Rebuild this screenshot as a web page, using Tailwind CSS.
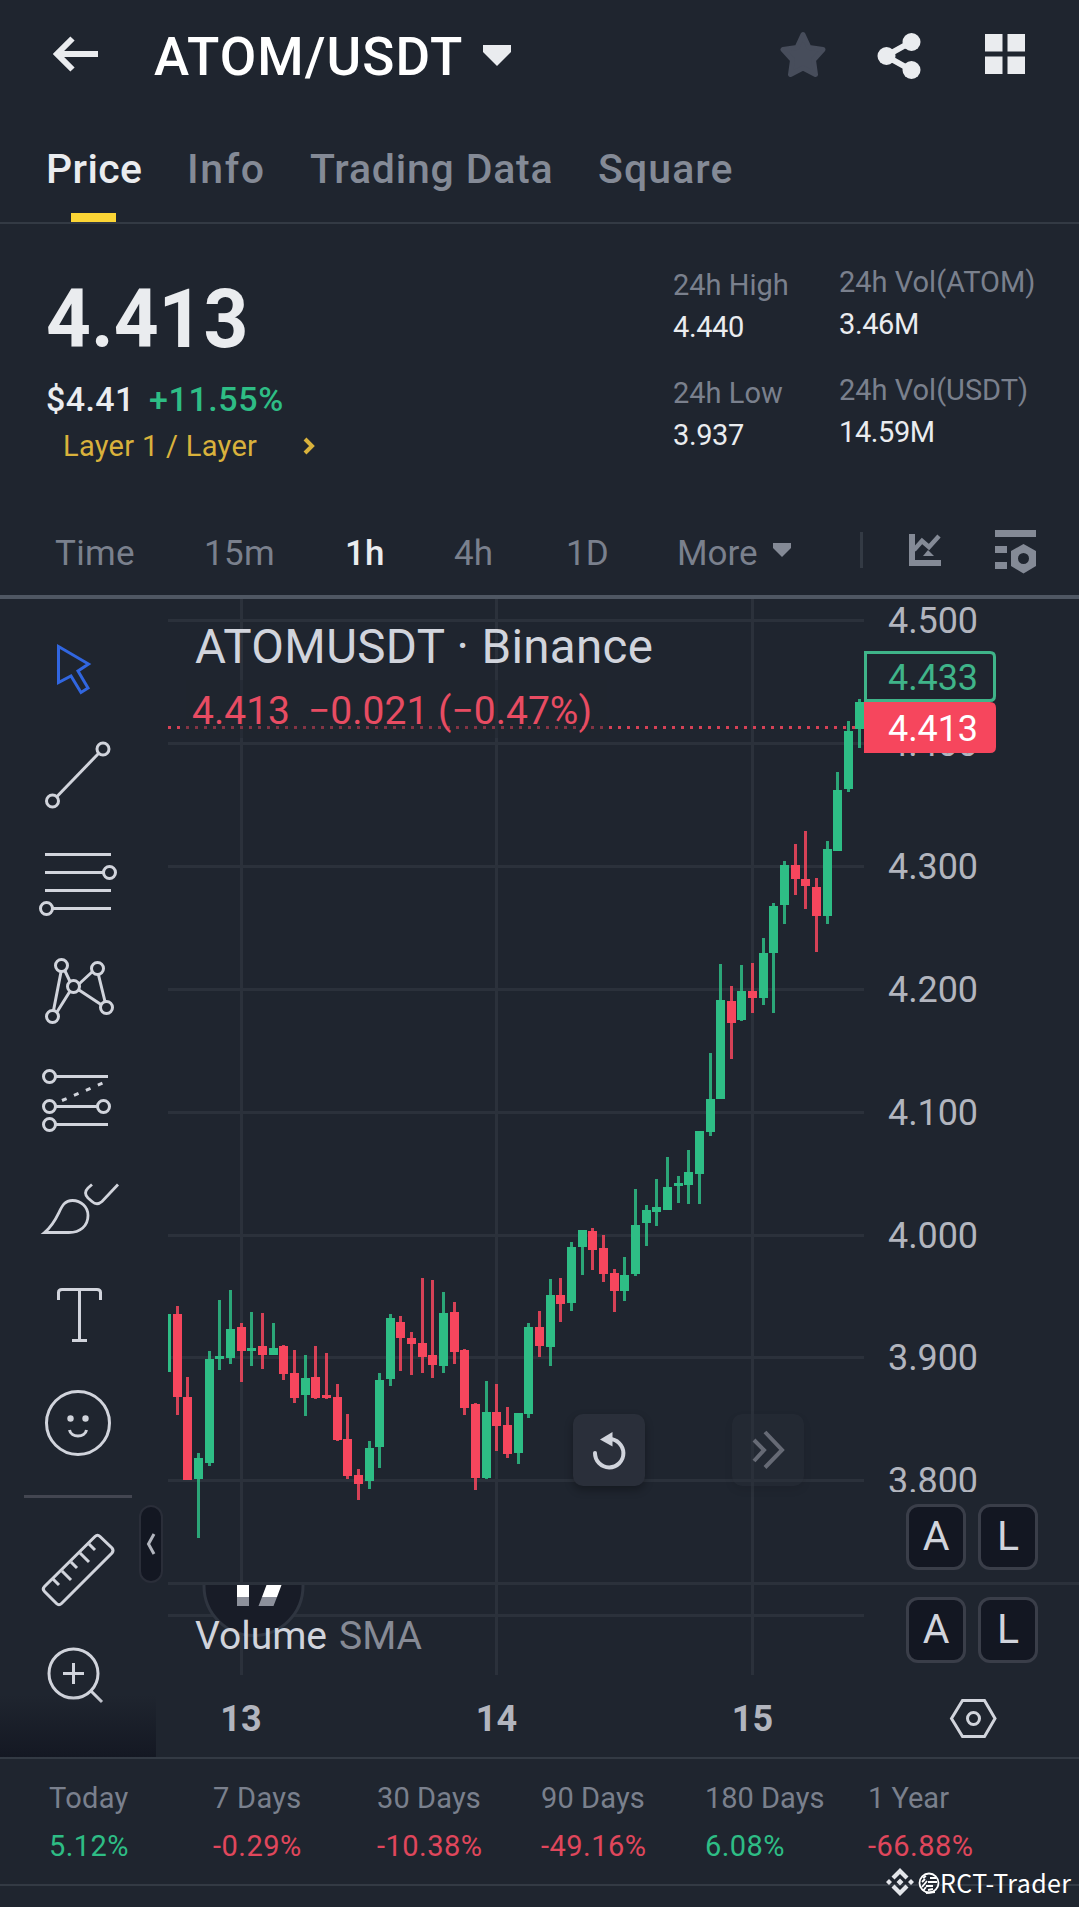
<!DOCTYPE html>
<html lang="en">
  <head>
    <meta charset="UTF-8" />
    <meta name="viewport" content="width=device-width, initial-scale=1.0" />
    <title>ATOM/USDT</title>
    <script src="https://cdn.jsdelivr.net/npm/@tailwindcss/browser@4"></script>
  </head>

  <body class="bg-[#1f252f] font-['Roboto',sans-serif] text-[#eaecef]">
    <div class="relative w-[1079px] h-[1907px] overflow-hidden">
      <!-- Header -->
      <header class="flex items-center h-28 pl-[52px] pr-[54px]">
        <svg class="w-[48px] h-[40px]" viewBox="0 0 48 40" fill="none" stroke="#eaecef" stroke-width="6">
          <path d="M46 18H5M20.500 2.500L5 18L20.500 33.500" />
        </svg>
        <h1 class="ml-[54px] w-[327px] pt-0.5 text-[53px] leading-none font-medium tracking-[1.1px] text-white">ATOM/USDT</h1>
        <svg class="w-[30px] h-[24px] ml-[1px]" viewBox="0 0 30 24" fill="#eaecef">
          <path d="M1 1H29V8L15 22L1 8Z" />
        </svg>
        <div class="flex items-center ml-auto">
          <svg class="w-[46px] h-[48px] mb-0.5" viewBox="0 0 46 48" fill="#474d5b" stroke="#474d5b" stroke-width="5" stroke-linejoin="round">
            <path d="M23 3.500L29 16.500L43 18.500L33.500 29L35.500 43.500L23 37L10.500 43.500L12.500 29L3 18.500L17 16.500Z" />
          </svg>
          <svg class="w-[44px] h-[48px] ml-[51px]" viewBox="0 0 44 48" fill="#eaecef">
            <path d="M34 10L9 24L34 38" fill="none" stroke="#eaecef" stroke-width="6" />
            <circle cx="34.500" cy="10" r="9" />
            <circle cx="9.500" cy="24" r="9" />
            <circle cx="34.500" cy="38" r="9" />
          </svg>
          <svg class="w-[40px] h-[40px] ml-[64px] mb-1" viewBox="0 0 40 40" fill="#eaecef">
            <path d="M0 0H17.500V17.500H0ZM22.500 0H40V17.500H22.500ZM0 22.500H17.500V40H0ZM22.500 22.500H40V40H22.500Z" />
          </svg>
        </div>
      </header>

      <!-- Tabs -->
      <nav class="relative h-28 border-b-2 border-[#333a44] flex items-center pl-[46px] pt-1 text-[41px] leading-none font-medium text-[#848a96]">
        <span class="w-[141px] tracking-[0.4px] text-[#eaecef]">Price</span>
        <span class="w-[123px] tracking-[1.6px]">Info</span>
        <span class="w-[288px] whitespace-nowrap tracking-[0.8px]">Trading Data</span>
        <span class="tracking-[1.1px]">Square</span>
        <div class="absolute left-[71px] bottom-0 w-[45px] h-[9px] bg-[#fcd535]"></div>
      </nav>

      <!-- Price summary -->
      <section class="flex justify-between h-[284px] pl-[46px] pr-[35px]">
        <div>
          <div class="mt-[54px] text-[82px] leading-none font-bold origin-left scale-x-[0.955]">4.413</div>
          <div class="flex items-center mt-[22px] text-[34px] leading-none font-medium">
            <span class="w-[103px] tracking-[0.4px]">$4.41</span>
            <span class="tracking-[0.6px] text-[#2ebd85]">+11.55%</span>
          </div>
          <div class="flex items-center mt-[16px] pl-[17px] text-[#d9b23c]">
            <span class="w-[239px] text-[29px] leading-none tracking-[0.3px]">Layer 1 / Layer</span>
            <svg class="w-[14px] h-[18px] mt-[-2px]" viewBox="0 0 14 18" fill="none" stroke="currentColor" stroke-width="4">
              <path d="M3 2L10 9L3 16" />
            </svg>
          </div>
        </div>
        <div class="flex text-[29px] leading-none text-[#7a808d] whitespace-nowrap">
          <div class="w-[166px] pt-[47px]">
            <div>24h High</div>
            <div class="mt-[13px] tracking-[-0.4px] text-[#eaecef]">4.440</div>
            <div class="mt-[37px]">24h Low</div>
            <div class="mt-[13px] tracking-[-0.4px] text-[#eaecef]">3.937</div>
          </div>
          <div class="w-[205px] pt-[44px]">
            <div>24h Vol(ATOM)</div>
            <div class="mt-[13px] tracking-[-0.4px] text-[#eaecef]">3.46M</div>
            <div class="mt-[37px]">24h Vol(USDT)</div>
            <div class="mt-[13px] tracking-[-0.4px] text-[#eaecef]">14.59M</div>
          </div>
        </div>
      </section>

      <!-- Intervals -->
      <section class="flex items-center h-[91px] pt-1 border-b-4 border-[#4f5763] pl-[55px] text-[35px] leading-none text-[#7a808d]">
        <span class="w-[149px] tracking-[0.3px]">Time</span>
        <span class="w-[141px] tracking-[0.3px]">15m</span>
        <span class="w-[109px] font-medium text-[#eaecef]">1h</span>
        <span class="w-[112px]">4h</span>
        <span class="w-[111px]">1D</span>
        <span class="w-[96px]">More</span>
        <svg class="w-[18px] h-[14px] mb-2" viewBox="0 0 18 14" fill="#848a96"><path d="M0 0H18V5L9 14L0 5Z" /></svg>
        <div class="w-[3px] h-[36px] ml-[69px] mb-2 bg-[#333a44]"></div>
        <svg class="w-[32px] h-[32px] ml-[46px] mb-2" viewBox="0 0 32 32" fill="none" stroke="#848a96">
          <path d="M3 0V29H32" stroke-width="6" />
          <path d="M5 16L13 7L20 13L30 2" stroke-width="4.500" />
          <path d="M14 22L19 16L25 22Z" fill="#848a96" stroke="none" />
        </svg>
        <svg class="w-[42px] h-[44px] ml-[54px] mb-1" viewBox="0 0 42 44" fill="#848a96">
          <path d="M0 0H41V7H0ZM0 16H12V23H0ZM0 32H12V39H0Z" />
          <path fill-rule="evenodd" d="M28.500 14L41 21V36L28.500 43.500L16 36V21ZM28.500 23A5.500 5.500 0 1 0 28.500 34A5.500 5.500 0 1 0 28.500 23Z" />
        </svg>
      </section>

      <!-- Chart -->
      <section class="relative flex h-[1158px]">
        <!-- Drawing tools -->
        <aside class="relative w-[156px] pt-[15px] flex flex-col">
          <svg class="w-[156px] h-[108px]" viewBox="0 0 156 108" fill="none" stroke="#3166e0" stroke-width="3">
            <path d="M58.500 32.500L88.500 50L78 57L88 74L81 78.500L71 62L58.500 68.500Z" />
          </svg>
          <svg class="w-[156px] h-[108px]" viewBox="0 0 156 108" fill="none" stroke="#d1d4dc" stroke-width="3">
            <circle cx="103" cy="27" r="6" /><circle cx="52.500" cy="79" r="6" />
            <path d="M57 74.500L98.500 31.500" />
          </svg>
          <svg class="w-[156px] h-[108px]" viewBox="0 0 156 108" fill="none" stroke="#d1d4dc" stroke-width="3">
            <path d="M45 24.500H111M45 42.500H103M45 60.500H111M53 78.500H111" />
            <circle cx="109.500" cy="42.500" r="6" /><circle cx="46.500" cy="78.500" r="6" />
          </svg>
          <svg class="w-[156px] h-[108px]" viewBox="0 0 156 108" fill="none" stroke="#d1d4dc" stroke-width="3">
            <path d="M61 34L53.500 72.500M65 33L70 43.500M79 46L92 34M98.500 37L105 63.500M79 52L101 66.500M69.500 54L57 74" />
            <circle cx="61.500" cy="27.500" r="6" /><circle cx="97.500" cy="30.500" r="6" /><circle cx="73.500" cy="48.500" r="6" />
            <circle cx="52.500" cy="78.500" r="6" /><circle cx="106.500" cy="69.500" r="6" />
          </svg>
          <svg class="w-[156px] h-[108px]" viewBox="0 0 156 108" fill="none" stroke="#d1d4dc" stroke-width="3">
            <path d="M56 30.500H108M56 60.500H97M56 78.500H108" />
            <path d="M62 54.500L104 36.500" stroke-dasharray="5 8" />
            <circle cx="49.500" cy="30.500" r="6" /><circle cx="49.500" cy="60.500" r="6" />
            <circle cx="103.500" cy="60.500" r="6" /><circle cx="49.500" cy="78.500" r="6" />
          </svg>
          <svg class="w-[156px] h-[108px]" viewBox="0 0 156 108" fill="none" stroke="#d1d4dc" stroke-width="2.800">
            <path d="M44.500 78.500C62 64 58 46.500 72.500 46.500C81 46.500 88 53 88 61.500C88 72 80 78.500 69 78.500Z" />
            <path d="M92 30.500L88 34Q83 39 88 44L92 47.500Q97 52 102 47.500L118 30.500" />
          </svg>
          <svg class="w-[156px] h-[108px]" viewBox="0 0 156 108" fill="none" stroke="#d1d4dc" stroke-width="3">
            <path d="M58.500 38V30.500Q58.500 27.500 62 27.500H97Q100.500 27.500 100.500 30.500V38M79.500 27.500V78.500M72 78.500H87" />
          </svg>
          <svg class="w-[156px] h-[108px]" viewBox="0 0 156 108" fill="none" stroke="#d1d4dc" stroke-width="3">
            <circle cx="78" cy="53" r="31.500" />
            <path d="M69.500 60C71 68 85 68 86.500 60" />
            <g fill="#d1d4dc" stroke="none"><circle cx="70.500" cy="48.500" r="3.200" /><circle cx="85.500" cy="48.500" r="3.200" /></g>
          </svg>
          <div class="ml-6 mt-[17px] mb-[17px] w-[108px] h-[3px] shrink-0 bg-[#434651]"></div>
          <svg class="w-[156px] h-[108px]" viewBox="0 0 156 108" fill="none" stroke="#d1d4dc" stroke-width="3">
            <path d="M95 21.500Q97.500 19 100 21.500L112 33Q114 35.500 112 38L61.500 88.500Q59 91 56.500 88.500L44.500 76.500Q42 74 44.500 71.500Z" />
            <path d="M53 64L59 70M62 56L71 65M71 47L77 53M80 38L89 47M89 29L95 35" />
          </svg>
          <svg class="w-[156px] h-[108px]" viewBox="0 0 156 108" fill="none" stroke="#d1d4dc" stroke-width="3">
            <circle cx="73.500" cy="50.500" r="24.500" />
            <path d="M63 50.500H84M73.500 40V61M91 68L102 79" />
          </svg>
          <div class="absolute left-0 bottom-0 w-full h-[62px] bg-linear-to-b from-[#141823]/0 to-[#141823]"></div>
        </aside>

        <!-- Plot, x starts at 168 and y at 599 -->
        <svg class="ml-3 w-[911px] h-[1158px] shrink-0" viewBox="168 599 911 1158">
          <g id="grid" stroke="#2b313b" stroke-width="3"></g>
          <g id="logo">
            <clipPath id="logo-clip"><rect x="190" y="1585" width="130" height="60" /></clipPath>
            <g clip-path="url(#logo-clip)">
              <circle cx="253.500" cy="1586" r="49.500" fill="#181c27" stroke="#2f3540" stroke-width="3" />
              <path d="M237 1585H249V1597H237ZM266.500 1585H281.500L277 1597H262Z" fill="#fff" />
              <path d="M237 1597H249V1606H237ZM262 1597H277L273.500 1606H258.500Z" fill="#8c909b" />
            </g>
          </g>
          <path d="M168 727.500H864" stroke="#f6465d" stroke-width="3" stroke-dasharray="3 6" opacity="0.850" />
          <rect x="186" y="680" width="421" height="58" fill="#1f252f" fill-opacity="0.450" />
          <g id="candles"></g>
          <g font-family="Roboto, sans-serif" font-size="36" fill="#b2b5be" id="labels"></g>
          <path d="M864 652.500H990Q994.500 652.500 994.500 657V696Q994.500 700.500 990 700.500H865.500V652.500" fill="#1f252f" stroke="#3fb489" stroke-width="3" />
          <path d="M864 702H990Q996 702 996 708V747Q996 753 990 753H864Z" fill="#f6465d" />
          <g font-family="Roboto, sans-serif" font-size="36">
            <text x="888" y="690" textLength="90" fill="#3fb489">4.433</text>
            <text x="888" y="741" textLength="90" fill="#fff">4.413</text>
            <text x="195" y="663" font-size="47.500" textLength="458" fill="#d1d4dc">ATOMUSDT · Binance</text>
            <text x="192" y="724" font-size="39" textLength="98" fill="#e84c62">4.413</text>
            <text x="308" y="724" font-size="39" textLength="284" fill="#e84c62">−0.021 (−0.47%)</text>
            <text x="195" y="1649" font-size="39" textLength="132" fill="#d1d4dc">Volume</text>
            <text x="339" y="1649" font-size="39" textLength="83" fill="#868a95">SMA</text>
            <g font-weight="700" fill="#b2b5be" text-anchor="middle">
              <text x="241" y="1731">13</text>
              <text x="496.500" y="1731">14</text>
              <text x="752.500" y="1731">15</text>
            </g>
          </g>
          <path d="M951.500 1718.500L962.500 1700.500H984.500L995 1718.500L984.500 1736.500H962.500Z" fill="none" stroke="#d1d4dc" stroke-width="3" />
          <circle cx="973.500" cy="1718.500" r="6" fill="none" stroke="#d1d4dc" stroke-width="3" />
        </svg>

        <!-- Toolbar collapse handle -->
        <div class="absolute left-[139px] top-[906px] w-[24px] h-[78px] rounded-xl bg-[#131722] border-2 border-[#2a2e39] flex items-center justify-center">
          <svg class="w-[10px] h-[22px]" viewBox="0 0 10 22" fill="none" stroke="#b2b5be" stroke-width="3"><path d="M8 1L2.500 11L8 21" /></svg>
        </div>

        <!-- Scroll buttons -->
        <div class="absolute left-[573px] top-[815px] w-[72px] h-[72px] rounded-[10px] bg-[#2a2f3a] shadow-[0_4px_8px_rgba(0,0,0,0.3)]">
          <svg class="w-[72px] h-[72px]" viewBox="0 0 72 72" fill="none" stroke="#d1d4dc" stroke-width="4">
            <path d="M22 39A14.200 14.200 0 1 0 36 25" stroke-linecap="round" />
            <path d="M27 25.500L39.500 18V32.500Z" fill="#d1d4dc" stroke="none" />
          </svg>
        </div>
        <div class="absolute left-[732px] top-[815px] w-[72px] h-[72px] rounded-[10px] bg-[#2a2f3a]/40 shadow-[0_4px_8px_rgba(0,0,0,0.08)]">
          <svg class="w-[72px] h-[72px]" viewBox="0 0 72 72" fill="none" stroke="#666a75" stroke-width="4">
            <path d="M22 26L32 36L22 47M33 18L50 36L33 53.500" />
          </svg>
        </div>

        <!-- Auto and log scale toggles -->
        <div class="absolute left-[906px] top-[905px] grid grid-cols-2 gap-x-3 gap-y-[27px] text-[41px] leading-none text-[#d1d4dc]">
          <div class="w-[60px] h-[66px] pb-0.5 rounded-xl border-3 border-[#3a3e49] bg-[#131722] flex items-center justify-center">A</div>
          <div class="w-[60px] h-[66px] pb-0.5 rounded-xl border-3 border-[#3a3e49] bg-[#131722] flex items-center justify-center">L</div>
          <div class="w-[60px] h-[66px] pb-0.5 rounded-xl border-3 border-[#3a3e49] bg-[#131722] flex items-center justify-center">A</div>
          <div class="w-[60px] h-[66px] pb-0.5 rounded-xl border-3 border-[#3a3e49] bg-[#131722] flex items-center justify-center">L</div>
        </div>
      </section>

      <!-- Performance -->
      <section class="flex h-[129px] border-y-2 border-[#333a44] pl-[49px] pt-[25px] text-[29px] leading-none text-[#7a808d] whitespace-nowrap">
        <div class="w-[164px]"><div class="tracking-[0.3px]">Today</div><div class="mt-[19px] tracking-[0.4px] text-[#2ebd85]">5.12%</div></div>
        <div class="w-[164px]"><div class="tracking-[0.3px]">7 Days</div><div class="mt-[19px] tracking-[0.5px] text-[#e0475c]">-0.29%</div></div>
        <div class="w-[164px]"><div class="tracking-[0.1px]">30 Days</div><div class="mt-[19px] tracking-[0.5px] text-[#e0475c]">-10.38%</div></div>
        <div class="w-[164px]"><div class="tracking-[0.1px]">90 Days</div><div class="mt-[19px] tracking-[0.5px] text-[#e0475c]">-49.16%</div></div>
        <div class="w-[163px]"><div>180 Days</div><div class="mt-[19px] tracking-[0.4px] text-[#2ebd85]">6.08%</div></div>
        <div><div>1 Year</div><div class="mt-[19px] tracking-[0.5px] text-[#e0475c]">-66.88%</div></div>
      </section>

      <!-- Watermark -->
      <div class="absolute left-[886px] top-[1866px] flex items-center h-8 text-white">
        <svg class="w-[28px] h-[28px]" viewBox="0 0 28 28" fill="#e3e5ea">
          <path d="M14 0L22.500 8.500L19.500 11.500L14 6L8.500 11.500L5.500 8.500ZM14 28L22.500 19.500L19.500 16.500L14 22L8.500 16.500L5.500 19.500ZM14 10.500L17.500 14L14 17.500L10.500 14ZM3 11L6 14L3 17L0 14ZM25 11L28 14L25 17L22 14Z" />
        </svg>
        <svg class="w-[22px] h-[24px] ml-1 mt-1" viewBox="0 0 22 24" fill="none" stroke="#fff" stroke-width="1.800">
          <circle cx="11" cy="11" r="9.500" />
          <path d="M12 6H18M10 10H19M8 14H15M5 6L8 4M4 10L7 7M4 15L9 9M5 19L8 15M8 21L17 20M10 18L15 17" />
        </svg>
        <span class="font-['Noto_Sans_CJK_SC',sans-serif] text-[25px] leading-8 tracking-[0.4px]">RCT-Trader</span>
      </div>
    </div>

    <script>
      const NS = "http://www.w3.org/2000/svg";
      const GREEN = "#2ebd85";
      const RED = "#f6465d";

      function add(parentId, tag, attrs, text) {
        const el = document.createElementNS(NS, tag);
        for (const key in attrs) el.setAttribute(key, attrs[key]);
        if (text) el.textContent = text;
        document.getElementById(parentId).appendChild(el);
      }

      // Grid lines and price labels
      const prices = ["4.500", "4.400", "4.300", "4.200", "4.100", "4.000", "3.900", "3.800"];
      prices.forEach((price, i) => {
        const y = Math.round(620 + i * 122.9) + 0.5;
        add("grid", "path", { d: `M168 ${y}H864` });
        add("labels", "text", { x: 888, y: y + 12.5, textLength: 90 }, price);
      });
      [241.5, 496.5, 752.5].forEach((x) => add("grid", "path", { d: `M${x} 599V1675` }));
      add("grid", "path", { d: "M168 1583.500H1079" });
      add("grid", "path", { d: "M168 1615.500H864" });
      add("labels", "rect", { x: 880, y: 1492, width: 110, height: 8, fill: "#1f252f" });

      // [up, high, body top, body bottom, low]
      const candles = [
        [0, 1306, 1314, 1397, 1415], [0, 1377, 1397, 1480, 1480], [1, 1453, 1458, 1479, 1538],
        [1, 1351, 1359, 1463, 1466], [1, 1300, 1356, 1359, 1370], [1, 1290, 1329, 1358, 1364],
        [0, 1323, 1327, 1351, 1382], [1, 1312, 1348, 1351, 1366], [0, 1313, 1346, 1355, 1369],
        [1, 1323, 1348, 1355, 1355], [0, 1345, 1346, 1374, 1380], [0, 1350, 1373, 1398, 1403],
        [1, 1355, 1378, 1395, 1416], [0, 1346, 1377, 1398, 1399], [0, 1353, 1395, 1398, 1399],
        [0, 1384, 1397, 1440, 1441], [0, 1414, 1439, 1476, 1479], [0, 1469, 1475, 1484, 1500],
        [1, 1441, 1448, 1481, 1489], [1, 1373, 1380, 1447, 1468], [1, 1314, 1318, 1379, 1386],
        [0, 1316, 1322, 1338, 1371], [0, 1332, 1338, 1344, 1375], [0, 1278, 1343, 1357, 1373],
        [0, 1280, 1355, 1365, 1378], [1, 1292, 1313, 1366, 1373], [0, 1302, 1312, 1352, 1364],
        [0, 1349, 1350, 1408, 1415], [0, 1403, 1404, 1478, 1490], [1, 1381, 1412, 1478, 1479],
        [0, 1384, 1412, 1426, 1451], [0, 1407, 1425, 1454, 1458], [1, 1413, 1413, 1453, 1464],
        [1, 1323, 1327, 1414, 1418], [0, 1311, 1327, 1346, 1357], [1, 1279, 1295, 1347, 1366],
        [0, 1278, 1295, 1304, 1322], [1, 1242, 1247, 1303, 1311], [1, 1230, 1230, 1247, 1275],
        [0, 1228, 1231, 1250, 1270], [0, 1235, 1248, 1274, 1282], [0, 1269, 1273, 1291, 1312],
        [1, 1257, 1275, 1291, 1301], [1, 1189, 1225, 1274, 1276], [1, 1205, 1210, 1223, 1246],
        [1, 1179, 1207, 1212, 1226], [1, 1157, 1187, 1210, 1210], [1, 1176, 1183, 1186, 1203],
        [1, 1150, 1172, 1185, 1204], [1, 1131, 1131, 1174, 1204], [1, 1053, 1099, 1132, 1136],
        [1, 964, 1000, 1099, 1099], [0, 986, 1001, 1023, 1059], [1, 965, 991, 1020, 1021],
        [0, 963, 991, 998, 1013], [1, 938, 953, 998, 1005], [1, 903, 906, 953, 1013],
        [1, 861, 865, 905, 924], [0, 844, 865, 879, 895], [0, 831, 879, 886, 909],
        [0, 878, 887, 916, 952], [1, 841, 849, 916, 924], [1, 772, 790, 851, 851],
        [1, 721, 731, 789, 792], [1, 699, 702, 729, 748],
      ];
      add("candles", "rect", { x: 168, y: 1314, width: 3, height: 58, fill: GREEN });
      candles.forEach(([up, high, top, bottom, low], i) => {
        const x = Math.floor(177.2 + i * 10.656);
        const fill = up ? GREEN : RED;
        add("candles", "rect", { x: x - 1, y: high, width: 3, height: low - high, fill, opacity: 0.85 });
        add("candles", "rect", { x: x - 4, y: top, width: 9, height: bottom - top, fill });
      });
    </script>
  </body>
</html>
